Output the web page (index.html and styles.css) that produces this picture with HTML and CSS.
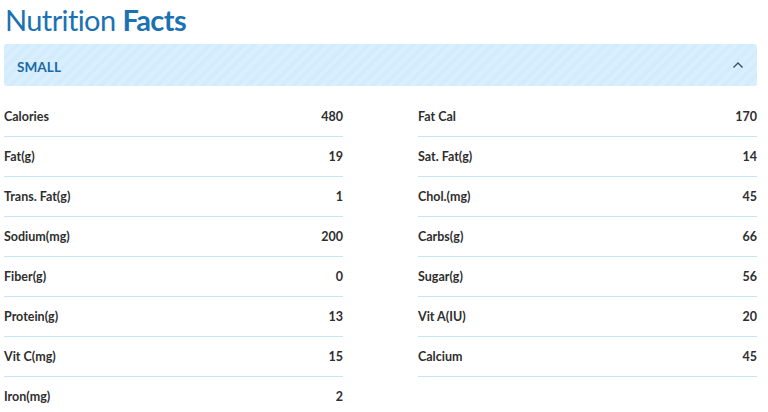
FILE: index.html
```html
<!DOCTYPE html>
<html>
<head>
<meta charset="utf-8">
<link rel="stylesheet" href="styles.css">
</head>
<body>
<div class="page">
  <h1 class="title"><span class="light">Nutrition</span> <span class="bold">Facts</span></h1>
  <div class="bar">
    <span class="bar-label">SMALL</span>
    <svg class="chev" width="12" height="8" viewBox="0 0 12 8"><path d="M1.5 6.5 L6 2 L10.5 6.5" fill="none" stroke="#34506e" stroke-width="1.4"/></svg>
  </div>
  <div class="grid">
    <div class="col">
      <div class="row"><span>Calories</span><span>480</span></div>
      <div class="row"><span>Fat(g)</span><span>19</span></div>
      <div class="row"><span>Trans. Fat(g)</span><span>1</span></div>
      <div class="row"><span>Sodium(mg)</span><span>200</span></div>
      <div class="row"><span>Fiber(g)</span><span>0</span></div>
      <div class="row"><span>Protein(g)</span><span>13</span></div>
      <div class="row"><span>Vit C(mg)</span><span>15</span></div>
      <div class="row"><span>Iron(mg)</span><span>2</span></div>
    </div>
    <div class="col">
      <div class="row"><span>Fat Cal</span><span>170</span></div>
      <div class="row"><span>Sat. Fat(g)</span><span>14</span></div>
      <div class="row"><span>Chol.(mg)</span><span>45</span></div>
      <div class="row"><span>Carbs(g)</span><span>66</span></div>
      <div class="row"><span>Sugar(g)</span><span>56</span></div>
      <div class="row"><span>Vit A(IU)</span><span>20</span></div>
      <div class="row"><span>Calcium</span><span>45</span></div>
    </div>
  </div>
</div>
</body>
</html>
```
FILE: styles.css
```css
html, body {
  margin: 0;
  padding: 0;
  background: #fff;
}
.page {
  padding: 0 11px 0 4px;
  font-family: Lato, "Noto Sans", sans-serif;
}
.title {
  margin: 0;
  padding: 3px 0 0 1px;
  height: 41px;
  box-sizing: border-box;
  font-size: 29px;
  line-height: 34px;
  color: #1a72b3;
  font-weight: 400;
  letter-spacing: -0.6px;
}
.title .light { font-weight: 400; }
.title .bold { font-weight: 700; }
.bar {
  height: 42px;
  border-radius: 3px;
  background: repeating-linear-gradient(135deg, #d3ecfd 0 4px, #d9effe 4px 8px);
  display: flex;
  align-items: center;
  justify-content: space-between;
  padding: 3px 13px 0 13px;
  box-sizing: border-box;
  margin-top: 3px;
}
.bar-label {
  font-size: 13.5px;
  font-weight: 700;
  color: #1b6aa4;
  letter-spacing: 0.1px;
}
.chev { display: block; margin-top: -3px; }
.grid {
  display: grid;
  grid-template-columns: 339px 339px;
  column-gap: 75px;
  margin-top: 11px;
}
.row {
  height: 40px;
  box-sizing: border-box;
  border-bottom: 1.5px solid #c5e6f8;
  display: flex;
  justify-content: space-between;
  align-items: center;
  font-size: 12.5px;
  font-weight: 700;
  color: #2e2e2e;
}
```
